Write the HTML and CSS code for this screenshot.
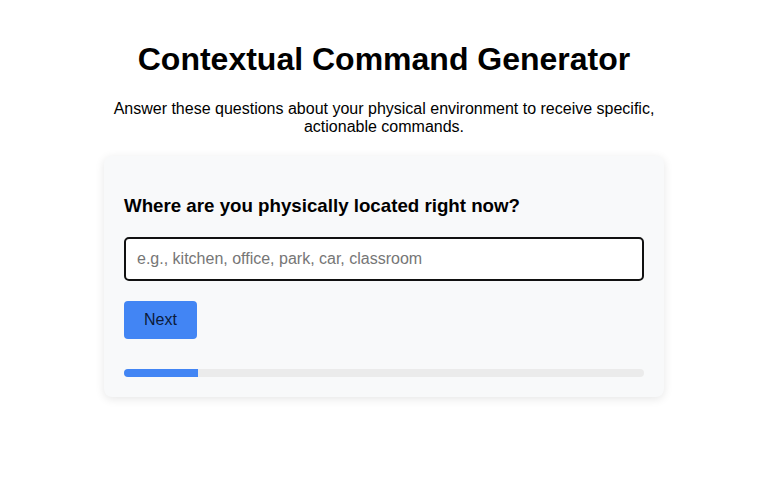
FILE: index.html
```html
<!DOCTYPE html>
<html lang="en">
<head>
    <meta charset="UTF-8">
    <meta name="viewport" content="width=device-width, initial-scale=1.0">
    <title>Contextual Command Generator</title>
    <link rel="stylesheet" href="styles.css">
</head>
<body>
    <div class="container">
        <h1>Contextual Command Generator</h1>
        <p class="intro">Answer these questions about your physical environment to receive specific, actionable commands.</p>

        <div class="question-card">
            <h3 class="question">Where are you physically located right now?</h3>
            <input type="text" class="answer" placeholder="e.g., kitchen, office, park, car, classroom" autofocus>
            <button class="next-btn">Next</button>
            <div class="progress">
                <div class="progress-fill" style="width: 14.3%"></div>
            </div>
        </div>
    </div>
</body>
</html>
```

FILE: styles.css
```css
body {
    font-family: "Liberation Sans", Arial, sans-serif;
    background-color: #fff;
    color: #000;
    margin: 0;
}

.container {
    max-width: 560px;
    margin: 0 auto;
    padding: 20px;
}

h1 {
    font-size: 32px;
    text-align: center;
    margin: 21px 0 22px;
}

.intro {
    text-align: center;
    font-size: 16px;
    margin: 0 0 20px;
}

.question-card {
    background-color: #f8f9fa;
    border-radius: 8px;
    box-shadow: 0 2px 10px rgba(0, 0, 0, 0.1);
    padding: 20px;
    display: flex;
    flex-direction: column;
    align-items: flex-start;
}

.question {
    font-size: 18.72px;
    margin: 19px 0 20px;
}

.answer {
    box-sizing: border-box;
    width: 100%;
    height: 44px;
    padding: 10px 11px;
    font-family: inherit;
    font-size: 16px;
    border: 2px solid #111;
    border-radius: 5px;
    background: #fff;
    outline: none;
}

.answer::placeholder {
    color: #767676;
}

.next-btn {
    margin-top: 20px;
    padding: 10px 20px;
    font-family: inherit;
    font-size: 16px;
    color: #0b1a3a;
    background-color: #4285f4;
    border: none;
    border-radius: 4px;
    cursor: pointer;
}

.progress {
    margin-top: 30px;
    width: 100%;
    height: 8px;
    background-color: #ebebeb;
    border-radius: 4px;
    overflow: hidden;
}

.progress-fill {
    height: 100%;
    background-color: #4285f4;
}
```
